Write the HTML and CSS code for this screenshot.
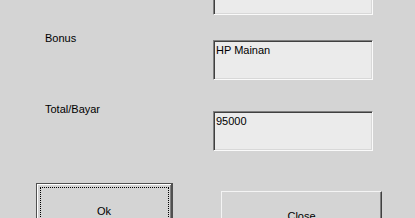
FILE: index.html
```html
<!DOCTYPE html>
<html lang="en">

<head>
    <meta charset="UTF-8">
    <meta name="viewport" content="width=device-width, initial-scale=1.0">
    <title>Bonus</title>
    <link rel="stylesheet" href="styles.css">
</head>

<body>
    <div class="form">
        <div class="row first">
            <span class="label"></span>
            <div class="field"></div>
        </div>
        <div class="row">
            <span class="label">Bonus</span>
            <div class="field">HP Mainan</div>
        </div>
        <div class="row">
            <span class="label">Total/Bayar</span>
            <div class="field">95000</div>
        </div>
    </div>
    <div class="buttons">
        <div class="btn ok"><span>Ok</span></div>
        <div class="btn close"><span>Close</span></div>
    </div>
</body>

</html>
```

FILE: styles.css
```css
* {
    padding: 0;
    margin: 0;
    box-sizing: border-box;
}

body {
    width: 415px;
    height: 218px;
    overflow: hidden;
    background-color: #d4d4d4;
    font-family: "Liberation Sans", Arial, sans-serif;
    font-size: 11px;
    line-height: 13px;
    color: #000;
}

.form {
    padding-left: 45px;
}

.row {
    display: flex;
    margin-top: 23px;
}

.row.first {
    margin-top: 0;
}

.row:nth-child(2) {
    margin-top: 17px;
}

.label {
    width: 168px;
}

.field {
    width: 160px;
    height: 40px;
    margin-top: 8px;
    padding: 3px 1px 0 2px;
    background-color: #ebebeb;
    border-top: 1px solid #808080;
    border-left: 1px solid #808080;
    border-right: 1px solid #fafafa;
    border-bottom: 1px solid #fafafa;
    box-shadow: inset 1px 1px 0 #404040, inset -1px -1px 0 #d8d8d8;
}

.row.first .field {
    margin-top: -25px;
}

.buttons {
    display: flex;
    align-items: flex-start;
    gap: 48px;
    margin-top: 32px;
    padding-left: 36px;
}

.btn {
    height: 50px;
    text-align: center;
    background-color: #d4d4d4;
    border: 1px solid #404040;
    box-shadow: inset 1px 1px 0 #fff, inset -1px -1px 0 #808080;
}

.ok {
    width: 137px;
    padding-top: 21px;
    border-right-width: 2px;
    border-color: #505050;
    outline: 1px dotted #000;
    outline-offset: -5px;
}

.close {
    width: 161px;
    margin-top: 8px;
    padding-top: 18px;
    border-top-color: #f4f4f4;
    border-left-color: #f4f4f4;
    box-shadow: inset -1px -1px 0 #808080;
}
```
